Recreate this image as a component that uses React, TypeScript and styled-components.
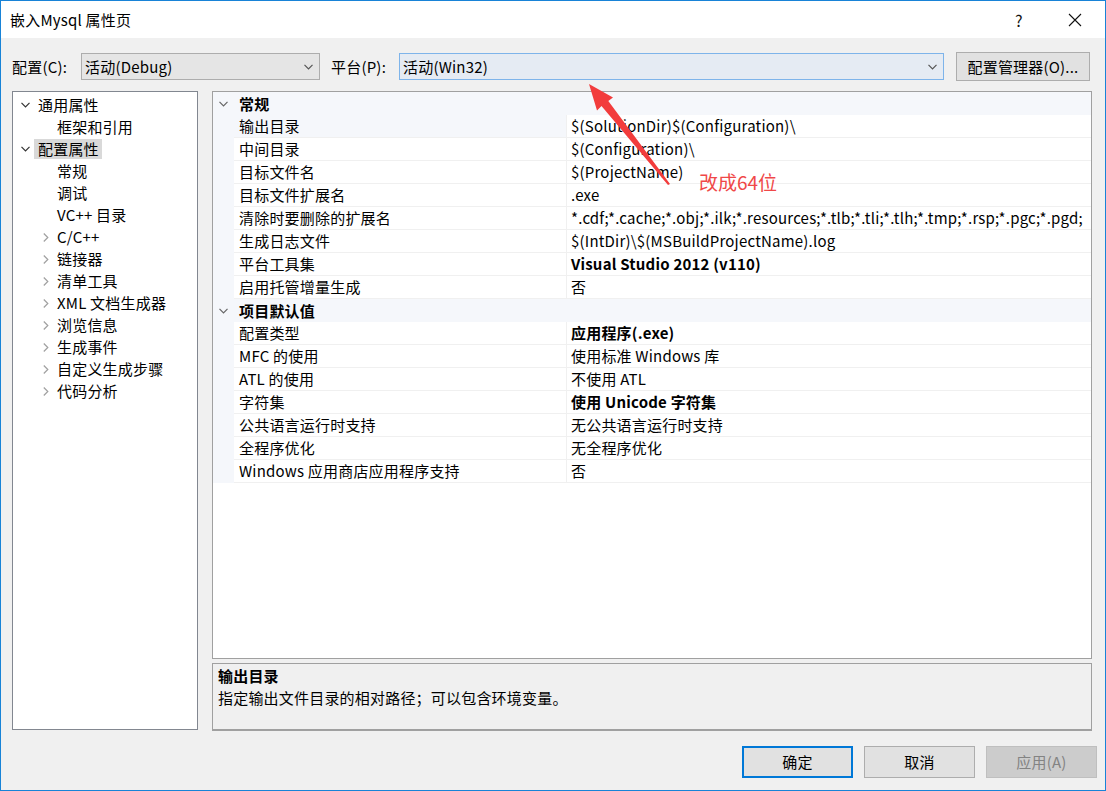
import React from "react";
import styled, { createGlobalStyle } from "styled-components";

const FONT = `"Noto Sans CJK SC", "Noto Sans", sans-serif`;

const GlobalStyle = createGlobalStyle`
  html, body { margin: 0; padding: 0; background: #f0f0f0; }
  body { font-family: ${FONT}; font-size: 15px; color: #000; letter-spacing: 0.2px; }
  * { box-sizing: border-box; }
`;

const Window = styled.div`
  position: relative;
  width: 1106px;
  height: 791px;
  border: 1px solid #1883d7;
  background: #f0f0f0;
  display: flex;
  flex-direction: column;
  overflow: hidden;
`;

const TitleBar = styled.div`
  height: 37px;
  background: #fff;
  display: flex;
  align-items: center;
  padding-left: 9px;
  flex-shrink: 0;
`;

const Title = styled.div`
  flex: 1;
  font-size: 15px;
  line-height: 20px;
`;

const TitleButton = styled.div`
  width: 46px;
  height: 37px;
  display: flex;
  align-items: center;
  justify-content: center;
  font-size: 16px;
  color: #111;
`;

const TitleButtons = styled.div`
  display: flex;
  gap: 10px;
  padding-right: 7px;
`;

const Toolbar = styled.div`
  display: flex;
  align-items: center;
  height: 29px;
  margin-top: 14px;
  padding-left: 11px;
`;

const Label = styled.span<{ $w: number; $ml?: number }>`
  width: ${(p) => p.$w}px;
  margin-left: ${(p) => p.$ml ?? 0}px;
  font-size: 15px;
  line-height: 20px;
  flex-shrink: 0;
`;

const Combo = styled.div<{ $w: number; $active?: boolean }>`
  width: ${(p) => p.$w}px;
  height: 27px;
  border: 1px solid ${(p) => (p.$active ? "#7eb4ea" : "#adadad")};
  background: ${(p) => (p.$active ? "#e5ebf3" : "#e5e5e5")};
  display: flex;
  align-items: center;
  padding: 0 6px 0 3px;
  flex-shrink: 0;
`;

const ComboText = styled.span`
  flex: 1;
  font-size: 15px;
  line-height: 20px;
`;

const PushButton = styled.div<{
  $w: number;
  $h: number;
  $ml?: number;
  $primary?: boolean;
  $disabled?: boolean;
}>`
  width: ${(p) => p.$w}px;
  height: ${(p) => p.$h}px;
  margin-left: ${(p) => p.$ml ?? 0}px;
  display: flex;
  align-items: center;
  justify-content: center;
  font-size: 15px;
  line-height: 20px;
  flex-shrink: 0;
  background: ${(p) => (p.$disabled ? "#cccccc" : "#e1e1e1")};
  color: ${(p) => (p.$disabled ? "#838383" : "#000")};
  border: ${(p) =>
    p.$primary ? "2px solid #0078d7" : p.$disabled ? "1px solid #bfbfbf" : "1px solid #adadad"};
`;

const Main = styled.div`
  display: flex;
  height: 640px;
  margin-top: 10px;
  padding-left: 11px;
`;

const TreePanel = styled.div`
  width: 186px;
  height: 639px;
  background: #fff;
  border: 1px solid #828790;
  padding-top: 2px;
  flex-shrink: 0;
`;

const TreeRow = styled.div<{ $level: number }>`
  height: 22px;
  display: flex;
  align-items: center;
  padding-left: ${(p) => (p.$level === 0 ? 8 : 30)}px;
`;

const Twisty = styled.span<{ $level: number }>`
  width: ${(p) => (p.$level === 0 ? 13 : 10)}px;
  display: flex;
  align-items: center;
  justify-content: flex-start;
  flex-shrink: 0;
`;

const TreeText = styled.span<{ $selected?: boolean }>`
  font-size: 15px;
  line-height: 20px;
  padding: 0 3px 0 4px;
  background: ${(p) => (p.$selected ? "#d9d9d9" : "transparent")};
  white-space: nowrap;
`;

const RightColumn = styled.div`
  width: 880px;
  margin-left: 14px;
  display: flex;
  flex-direction: column;
`;

const Grid = styled.div`
  flex: 1;
  background: #fff;
  border: 1px solid #a0a0a0;
  display: flex;
  flex-direction: column;
  overflow: hidden;
`;

const CategoryRow = styled.div`
  height: 23px;
  display: flex;
  align-items: center;
  background: #f5f7fb;
  flex-shrink: 0;
`;

const Gutter = styled.div`
  width: 21px;
  height: 100%;
  display: flex;
  align-items: center;
  justify-content: center;
  background: #f5f7fb;
  flex-shrink: 0;
`;

const CategoryText = styled.span`
  font-weight: bold;
  font-size: 15px;
  line-height: 20px;
  padding-left: 5px;
`;

const PropRow = styled.div`
  height: 23px;
  display: flex;
  flex-shrink: 0;
`;

const NameCell = styled.div<{ $selected?: boolean }>`
  width: 333px;
  height: 100%;
  display: flex;
  align-items: center;
  padding-left: 5px;
  border-bottom: 1px solid #f0f0f0;
  border-right: 1px solid #f0f0f0;
  background: ${(p) => (p.$selected ? "#f5f7fb" : "#fff")};
  font-size: 15px;
  line-height: 20px;
  white-space: nowrap;
  flex-shrink: 0;
`;

const ValueCell = styled.div<{ $bold?: boolean }>`
  flex: 1;
  min-width: 0;
  height: 100%;
  display: flex;
  align-items: center;
  padding-left: 4px;
  border-bottom: 1px solid #f0f0f0;
  font-size: 15px;
  line-height: 20px;
  font-weight: ${(p) => (p.$bold ? "bold" : "normal")};
  white-space: nowrap;
  overflow: hidden;
`;

const Description = styled.div`
  height: 68px;
  margin-top: 4px;
  border: 1px solid #a0a0a0;
  border-bottom: 2px solid #a0a0a0;
  background: #f0f0f0;
  padding: 1px 5px;
  flex-shrink: 0;
`;

const DescTitle = styled.div`
  font-weight: bold;
  font-size: 15px;
  line-height: 22px;
`;

const DescText = styled.div`
  font-size: 15px;
  line-height: 22px;
`;

const Footer = styled.div`
  display: flex;
  justify-content: flex-end;
  gap: 11px;
  margin-top: 15px;
  padding-right: 8px;
`;

const Overlay = styled.svg`
  position: absolute;
  left: 0;
  top: 0;
  pointer-events: none;
`;

const Annotation = styled.span`
  position: absolute;
  left: 698px;
  top: 169px;
  font-size: 19px;
  line-height: 24px;
  letter-spacing: 0;
  color: #f04848;
  white-space: nowrap;
`;

const ChevronDown = ({ color = "#444" }: { color?: string }) => (
  <svg width="9" height="6" viewBox="0 0 9 6">
    <path d="M0.5 0.8 L4.5 4.8 L8.5 0.8" fill="none" stroke={color} strokeWidth="1.2" />
  </svg>
);

const ChevronRight = () => (
  <svg width="6" height="9" viewBox="0 0 6 9">
    <path d="M0.8 0.5 L4.8 4.5 L0.8 8.5" fill="none" stroke="#a0a0a0" strokeWidth="1.2" />
  </svg>
);

const CloseIcon = () => (
  <svg width="14" height="14" viewBox="0 0 14 14">
    <path d="M1 1 L13 13 M13 1 L1 13" stroke="#111" strokeWidth="1.1" />
  </svg>
);

type TreeItem = { text: string; level: number; twisty?: "open" | "closed"; selected?: boolean };

const treeItems: TreeItem[] = [
  { text: "通用属性", level: 0, twisty: "open" },
  { text: "框架和引用", level: 1 },
  { text: "配置属性", level: 0, twisty: "open", selected: true },
  { text: "常规", level: 1 },
  { text: "调试", level: 1 },
  { text: "VC++ 目录", level: 1 },
  { text: "C/C++", level: 1, twisty: "closed" },
  { text: "链接器", level: 1, twisty: "closed" },
  { text: "清单工具", level: 1, twisty: "closed" },
  { text: "XML 文档生成器", level: 1, twisty: "closed" },
  { text: "浏览信息", level: 1, twisty: "closed" },
  { text: "生成事件", level: 1, twisty: "closed" },
  { text: "自定义生成步骤", level: 1, twisty: "closed" },
  { text: "代码分析", level: 1, twisty: "closed" },
];

type Prop = { name: string; value: string; bold?: boolean; selected?: boolean };
type Category = { title: string; props: Prop[] };

const categories: Category[] = [
  {
    title: "常规",
    props: [
      { name: "输出目录", value: "$(SolutionDir)$(Configuration)\\", selected: true },
      { name: "中间目录", value: "$(Configuration)\\" },
      { name: "目标文件名", value: "$(ProjectName)" },
      { name: "目标文件扩展名", value: ".exe" },
      {
        name: "清除时要删除的扩展名",
        value: "*.cdf;*.cache;*.obj;*.ilk;*.resources;*.tlb;*.tli;*.tlh;*.tmp;*.rsp;*.pgc;*.pgd;",
      },
      { name: "生成日志文件", value: "$(IntDir)\\$(MSBuildProjectName).log" },
      { name: "平台工具集", value: "Visual Studio 2012 (v110)", bold: true },
      { name: "启用托管增量生成", value: "否" },
    ],
  },
  {
    title: "项目默认值",
    props: [
      { name: "配置类型", value: "应用程序(.exe)", bold: true },
      { name: "MFC 的使用", value: "使用标准 Windows 库" },
      { name: "ATL 的使用", value: "不使用 ATL" },
      { name: "字符集", value: "使用 Unicode 字符集", bold: true },
      { name: "公共语言运行时支持", value: "无公共语言运行时支持" },
      { name: "全程序优化", value: "无全程序优化" },
      { name: "Windows 应用商店应用程序支持", value: "否" },
    ],
  },
];

export default function App() {
  return (
    <>
      <GlobalStyle />
      <Window>
        <TitleBar>
          <Title>嵌入Mysql 属性页</Title>
          <TitleButtons>
            <TitleButton>?</TitleButton>
            <TitleButton>
              <CloseIcon />
            </TitleButton>
          </TitleButtons>
        </TitleBar>

        <Toolbar>
          <Label $w={69}>配置(C):</Label>
          <Combo $w={239}>
            <ComboText>活动(Debug)</ComboText>
            <ChevronDown color="#555" />
          </Combo>
          <Label $w={68} $ml={11}>平台(P):</Label>
          <Combo $w={545} $active>
            <ComboText>活动(Win32)</ComboText>
            <ChevronDown color="#555" />
          </Combo>
          <PushButton $w={134} $h={29} $ml={12}>
            配置管理器(O)...
          </PushButton>
        </Toolbar>

        <Main>
          <TreePanel>
            {treeItems.map((t) => (
              <TreeRow key={t.text} $level={t.level}>
                <Twisty $level={t.level}>
                  {t.twisty === "open" && <ChevronDown color="#333" />}
                  {t.twisty === "closed" && <ChevronRight />}
                </Twisty>
                <TreeText $selected={t.selected}>{t.text}</TreeText>
              </TreeRow>
            ))}
          </TreePanel>

          <RightColumn>
            <Grid>
              {categories.map((c) => (
                <React.Fragment key={c.title}>
                  <CategoryRow>
                    <Gutter>
                      <ChevronDown color="#666" />
                    </Gutter>
                    <CategoryText>{c.title}</CategoryText>
                  </CategoryRow>
                  {c.props.map((p) => (
                    <PropRow key={p.name}>
                      <Gutter />
                      <NameCell $selected={p.selected}>{p.name}</NameCell>
                      <ValueCell $bold={p.bold}>{p.value}</ValueCell>
                    </PropRow>
                  ))}
                </React.Fragment>
              ))}
            </Grid>
            <Description>
              <DescTitle>输出目录</DescTitle>
              <DescText>指定输出文件目录的相对路径；可以包含环境变量。</DescText>
            </Description>
          </RightColumn>
        </Main>

        <Footer>
          <PushButton $w={111} $h={32} $primary>确定</PushButton>
          <PushButton $w={111} $h={32}>取消</PushButton>
          <PushButton $w={111} $h={32} $disabled>应用(A)</PushButton>
        </Footer>

        <Overlay width="1106" height="791" viewBox="0 0 1106 791">
          <polygon
            points="588,83 612,96.5 607.3,100 669,183 667,184 600.5,105 596,109.5"
            fill="#f23c3c"
          />
        </Overlay>
        <Annotation>改成64位</Annotation>
      </Window>
    </>
  );
}
